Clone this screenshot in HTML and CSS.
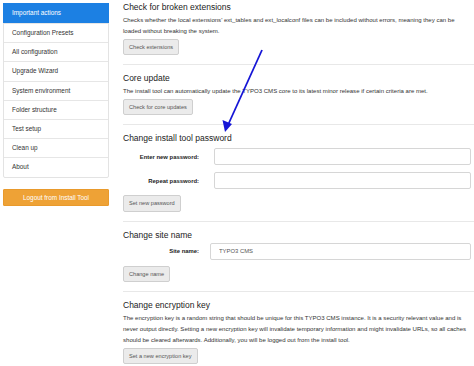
FILE: index.html
```html
<!DOCTYPE html>
<html>
<head>
<meta charset="utf-8">
<link rel="stylesheet" href="styles.css">
</head>
<body>
<div class="page">
  <aside class="sidebar">
    <ul class="menu">
      <li class="item active">Important actions</li>
      <li class="item">Configuration Presets</li>
      <li class="item">All configuration</li>
      <li class="item">Upgrade Wizard</li>
      <li class="item">System environment</li>
      <li class="item">Folder structure</li>
      <li class="item">Test setup</li>
      <li class="item">Clean up</li>
      <li class="item">About</li>
    </ul>
    <button class="logout">Logout from Install Tool</button>
  </aside>
  <main class="content">
    <section class="sec">
      <h2 class="title">Check for broken extensions</h2>
      <p class="text">Checks whether the local extensions' ext_tables and ext_localconf files can be included without errors, meaning they can be loaded without breaking the system.</p>
      <button class="btn">Check extensions</button>
    </section>
    <section class="sec">
      <h2 class="title">Core update</h2>
      <p class="text">The install tool can automatically update the TYPO3 CMS core to its latest minor release if certain criteria are met.</p>
      <button class="btn">Check for core updates</button>
    </section>
    <section class="sec">
      <h2 class="title">Change install tool password</h2>
      <div class="form">
        <div class="row"><label class="lbl">Enter new password:</label><input class="field" type="password"></div>
        <div class="row"><label class="lbl">Repeat password:</label><input class="field" type="password"></div>
      </div>
      <button class="btn">Set new password</button>
    </section>
    <section class="sec">
      <h2 class="title">Change site name</h2>
      <div class="form form-site">
        <div class="row site"><label class="lbl">Site name:</label><input class="field" type="text" value="TYPO3 CMS"></div>
      </div>
      <button class="btn">Change name</button>
    </section>
    <section class="sec last">
      <h2 class="title">Change encryption key</h2>
      <p class="text">The encryption key is a random string that should be unique for this TYPO3 CMS instance. It is a security relevant value and is never output directly. Setting a new encryption key will invalidate temporary information and might invalidate URLs, so all caches should be cleared afterwards. Additionally, you will be logged out from the install tool.</p>
      <button class="btn">Set a new encryption key</button>
    </section>
  </main>
  <svg class="arrow" width="474" height="366" viewBox="0 0 474 366">
    <line x1="262" y1="50" x2="228" y2="125" stroke="#1515d6" stroke-width="1.8"/>
    <polygon points="225,132 222.5,120 232,124" fill="#1515d6"/>
  </svg>
</div>
</body>
</html>
```
FILE: styles.css
```css
* { box-sizing: border-box; }
html, body { margin: 0; padding: 0; background: #fff; }
body {
  font-family: "Liberation Sans", Arial, Helvetica, sans-serif;
  color: #333;
  width: 474px;
  height: 366px;
  overflow: hidden;
}
.page {
  position: relative;
  display: flex;
  gap: 14px;
  padding: 0 0 0 3px;
}
.sidebar {
  width: 106px;
  flex: none;
  padding-top: 3px;
}
.menu {
  list-style: none;
  margin: 0;
  padding: 0;
  border: 1px solid #e3e3e3;
  border-radius: 2px;
}
.item {
  height: 19.2px;
  line-height: 18px;
  padding-left: 8px;
  font-size: 6.4px;
  color: #333;
  border-top: 1px solid #e6e6e6;
}
.item:first-child { border-top: none; }
.item.active {
  background: #1c80e3;
  color: #fff;
  margin: -1px -1px 0 -1px;
  padding-left: 9px;
  height: 20px;
  line-height: 20px;
}
.logout {
  display: block;
  width: 106px;
  margin-top: 11px;
  height: 17px;
  background: #eea236;
  border: 1px solid #e99a2c;
  border-radius: 1px;
  color: #fff;
  font-family: inherit;
  font-size: 6.4px;
  padding: 0;
}
.content {
  flex: 1;
  min-width: 0;
  padding-top: 1px;
}
.sec {
  border-bottom: 1px solid #e8e8e8;
  padding-bottom: 9px;
  margin-bottom: 7px;
}
.sec.last { border-bottom: none; }
.title {
  margin: 0;
  font-weight: normal;
  font-size: 8.5px;
  line-height: 12px;
  color: #222;
}
.text {
  margin: 1.5px 0 2px 0;
  font-size: 6.05px;
  line-height: 11px;
  color: #333;
  padding-right: 2px;
}
.btn {
  display: block;
  height: 16.5px;
  padding: 0 5px;
  background: #ebebeb;
  border: 1px solid #cfcfcf;
  border-radius: 2px;
  font-family: inherit;
  font-size: 5.6px;
  color: #555;
}
.form {
  margin-top: 4px;
  margin-bottom: 6px;
  display: flex;
  flex-direction: column;
  gap: 7px;
}
.form-site { margin-top: 2px; }
.row {
  display: flex;
  align-items: center;
  gap: 15px;
  padding-right: 3px;
}
.lbl {
  width: 76px;
  text-align: right;
  font-weight: bold;
  font-size: 5.9px;
  color: #222;
}
.site { gap: 11px; }
.field {
  flex: 1;
  height: 17px;
  border: 1px solid #d6d6d6;
  border-radius: 2px;
  font-family: inherit;
  font-size: 5.9px;
  padding: 0 8px;
  color: #555;
  background: #fff;
}
.arrow {
  position: absolute;
  left: 0;
  top: 0;
  pointer-events: none;
}
```
